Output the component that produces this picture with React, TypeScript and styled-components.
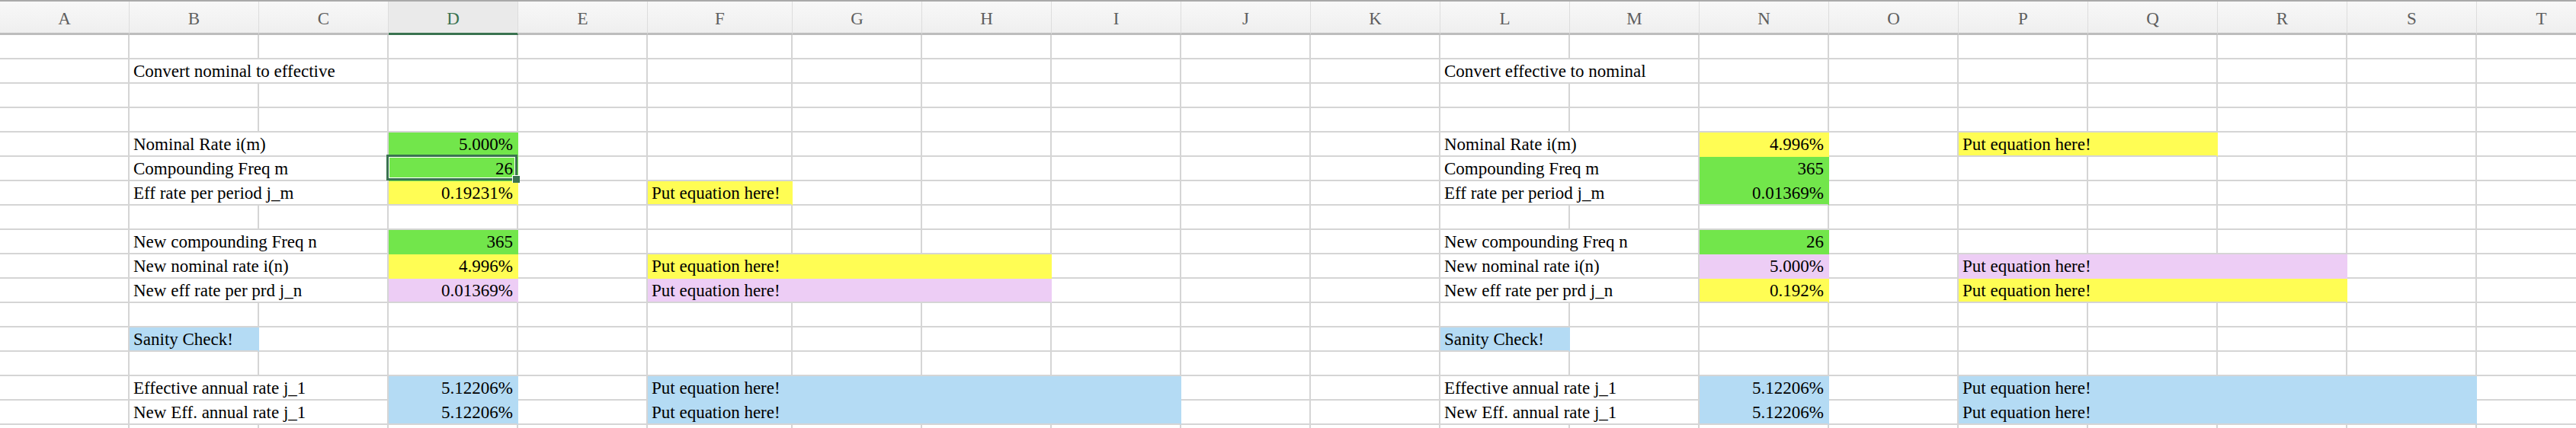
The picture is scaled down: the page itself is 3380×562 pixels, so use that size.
import React from 'react';
import styled, { createGlobalStyle } from 'styled-components';

const GlobalStyle = createGlobalStyle`
  html, body { margin: 0; padding: 0; background: #ffffff; overflow: hidden; }
  body { width: 3380px; height: 562px; }
`;

const COLS = 'ABCDEFGHIJKLMNOPQRST'.split('');
const colWidth = (c: string) => (c === 'F' ? 190 : 170);

const FILLS = {
  green: '#72e64b',
  yellow: '#fffd54',
  lavender: '#edcdf5',
  blue: '#b4dbf4',
} as const;
type Fill = keyof typeof FILLS;

const GRID = '#d5d5d5';
const ACCENT = '#3a7350';

type Spec = {
  col: string;
  span?: number;
  text?: string;
  fill?: Fill;
  align?: 'left' | 'right';
  selected?: boolean;
};

const EQ = 'Put equation here!';

const ROWS: Spec[][] = [
  [],
  [
    { col: 'B', span: 2, text: 'Convert nominal to effective' },
    { col: 'L', span: 2, text: 'Convert effective to nominal' },
  ],
  [],
  [],
  [
    { col: 'B', span: 2, text: 'Nominal Rate i(m)' },
    { col: 'D', text: '5.000%', fill: 'green', align: 'right' },
    { col: 'L', span: 2, text: 'Nominal Rate i(m)' },
    { col: 'N', text: '4.996%', fill: 'yellow', align: 'right' },
    { col: 'P', span: 2, text: EQ, fill: 'yellow' },
  ],
  [
    { col: 'B', span: 2, text: 'Compounding Freq m' },
    { col: 'D', text: '26', fill: 'green', align: 'right', selected: true },
    { col: 'L', span: 2, text: 'Compounding Freq m' },
    { col: 'N', text: '365', fill: 'green', align: 'right' },
  ],
  [
    { col: 'B', span: 2, text: 'Eff rate per period j_m' },
    { col: 'D', text: '0.19231%', fill: 'yellow', align: 'right' },
    { col: 'F', text: EQ, fill: 'yellow' },
    { col: 'L', span: 2, text: 'Eff rate per period j_m' },
    { col: 'N', text: '0.01369%', fill: 'green', align: 'right' },
  ],
  [],
  [
    { col: 'B', span: 2, text: 'New compounding Freq n' },
    { col: 'D', text: '365', fill: 'green', align: 'right' },
    { col: 'L', span: 2, text: 'New compounding Freq n' },
    { col: 'N', text: '26', fill: 'green', align: 'right' },
  ],
  [
    { col: 'B', span: 2, text: 'New nominal rate i(n)' },
    { col: 'D', text: '4.996%', fill: 'yellow', align: 'right' },
    { col: 'F', span: 3, text: EQ, fill: 'yellow' },
    { col: 'L', span: 2, text: 'New nominal rate i(n)' },
    { col: 'N', text: '5.000%', fill: 'lavender', align: 'right' },
    { col: 'P', span: 3, text: EQ, fill: 'lavender' },
  ],
  [
    { col: 'B', span: 2, text: 'New eff rate per prd j_n' },
    { col: 'D', text: '0.01369%', fill: 'lavender', align: 'right' },
    { col: 'F', span: 3, text: EQ, fill: 'lavender' },
    { col: 'L', span: 2, text: 'New eff rate per prd j_n' },
    { col: 'N', text: '0.192%', fill: 'yellow', align: 'right' },
    { col: 'P', span: 3, text: EQ, fill: 'yellow' },
  ],
  [],
  [
    { col: 'B', text: 'Sanity Check!', fill: 'blue' },
    { col: 'L', text: 'Sanity Check!', fill: 'blue' },
  ],
  [],
  [
    { col: 'B', span: 2, text: 'Effective annual rate j_1' },
    { col: 'D', text: '5.12206%', fill: 'blue', align: 'right' },
    { col: 'F', span: 4, text: EQ, fill: 'blue' },
    { col: 'L', span: 2, text: 'Effective annual rate j_1' },
    { col: 'N', text: '5.12206%', fill: 'blue', align: 'right' },
    { col: 'P', span: 4, text: EQ, fill: 'blue' },
  ],
  [
    { col: 'B', span: 2, text: 'New Eff. annual rate j_1' },
    { col: 'D', text: '5.12206%', fill: 'blue', align: 'right' },
    { col: 'F', span: 4, text: EQ, fill: 'blue' },
    { col: 'L', span: 2, text: 'New Eff. annual rate j_1' },
    { col: 'N', text: '5.12206%', fill: 'blue', align: 'right' },
    { col: 'P', span: 4, text: EQ, fill: 'blue' },
  ],
  [],
];

const fillAt = (r: number, c: number): Fill | undefined => {
  const row = ROWS[r];
  if (!row) return undefined;
  for (const s of row) {
    const start = COLS.indexOf(s.col);
    const end = start + (s.span ?? 1) - 1;
    if (c >= start && c <= end) return s.fill;
  }
  return undefined;
};

const Sheet = styled.div`
  width: 3380px;
  height: 562px;
  overflow: hidden;
  background: #ffffff;
  font-family: 'Liberation Serif', 'Times New Roman', serif;
`;

const HeaderRow = styled.div`
  display: flex;
  height: 46px;
  box-sizing: border-box;
  border-top: 2px solid #a9a9a9;
  background: linear-gradient(#f8f8f8, #eeeeee);
`;

const HeaderCell = styled.div<{ $w: number; $active?: boolean }>`
  flex: 0 0 ${(p) => p.$w}px;
  box-sizing: border-box;
  display: flex;
  align-items: center;
  justify-content: center;
  border-right: 1px solid #dddddd;
  border-bottom: 3px solid ${(p) => (p.$active ? ACCENT : '#bdbdbd')};
  background: ${(p) => (p.$active ? '#eaeaea' : 'transparent')};
  color: ${(p) => (p.$active ? ACCENT : '#5e5e5e')};
  font-size: 23px;
  padding-top: 4px;
`;

const Row = styled.div`
  display: flex;
  height: 32px;
`;

const Cell = styled.div<{
  $w: number;
  $bg?: string;
  $bottom: string;
  $align: 'left' | 'right';
}>`
  position: relative;
  flex: 0 0 ${(p) => p.$w}px;
  box-sizing: border-box;
  height: 32px;
  padding: 1px 5px 0 5px;
  border-right: 2px solid ${(p) => p.$bg ?? GRID};
  border-bottom: 2px solid ${(p) => p.$bottom};
  background: ${(p) => p.$bg ?? '#ffffff'};
  color: #000000;
  font-size: 23px;
  line-height: 29px;
  white-space: nowrap;
  overflow: visible;
  text-align: ${(p) => p.$align};
`;

const Selection = styled.div`
  position: absolute;
  left: -3px;
  top: -3px;
  right: -1px;
  bottom: -1px;
  border: 3px solid ${ACCENT};
  box-shadow: inset 0 0 0 1px #ffffff;
  z-index: 2;
  pointer-events: none;
`;

const FillHandle = styled.span`
  position: absolute;
  right: -6px;
  bottom: -6px;
  width: 9px;
  height: 9px;
  background: ${ACCENT};
  border-left: 1px solid #ffffff;
  border-top: 1px solid #ffffff;
`;

function SheetRow({ r }: { r: number }) {
  const specs = ROWS[r];
  const out: React.ReactNode[] = [];
  let c = 0;
  while (c < COLS.length) {
    const col = COLS[c];
    const spec = specs.find((s) => s.col === col);
    const span = spec?.span ?? 1;
    let w = 0;
    for (let k = c; k < c + span && k < COLS.length; k++) w += colWidth(COLS[k]);
    const fill = spec?.fill;
    const bg = fill ? FILLS[fill] : undefined;
    const below = fillAt(r + 1, c);
    const bottom = fill && below ? FILLS[fill] : GRID;
    out.push(
      <Cell key={col} $w={w} $bg={bg} $bottom={bottom} $align={spec?.align ?? 'left'}>
        {spec?.text}
        {spec?.selected && (
          <Selection>
            <FillHandle />
          </Selection>
        )}
      </Cell>
    );
    c += span;
  }
  return <Row>{out}</Row>;
}

export default function App() {
  return (
    <>
      <GlobalStyle />
      <Sheet>
        <HeaderRow>
          {COLS.map((c) => (
            <HeaderCell key={c} $w={colWidth(c)} $active={c === 'D'}>
              {c}
            </HeaderCell>
          ))}
        </HeaderRow>
        {ROWS.map((_, r) => (
          <SheetRow key={r} r={r} />
        ))}
      </Sheet>
    </>
  );
}
